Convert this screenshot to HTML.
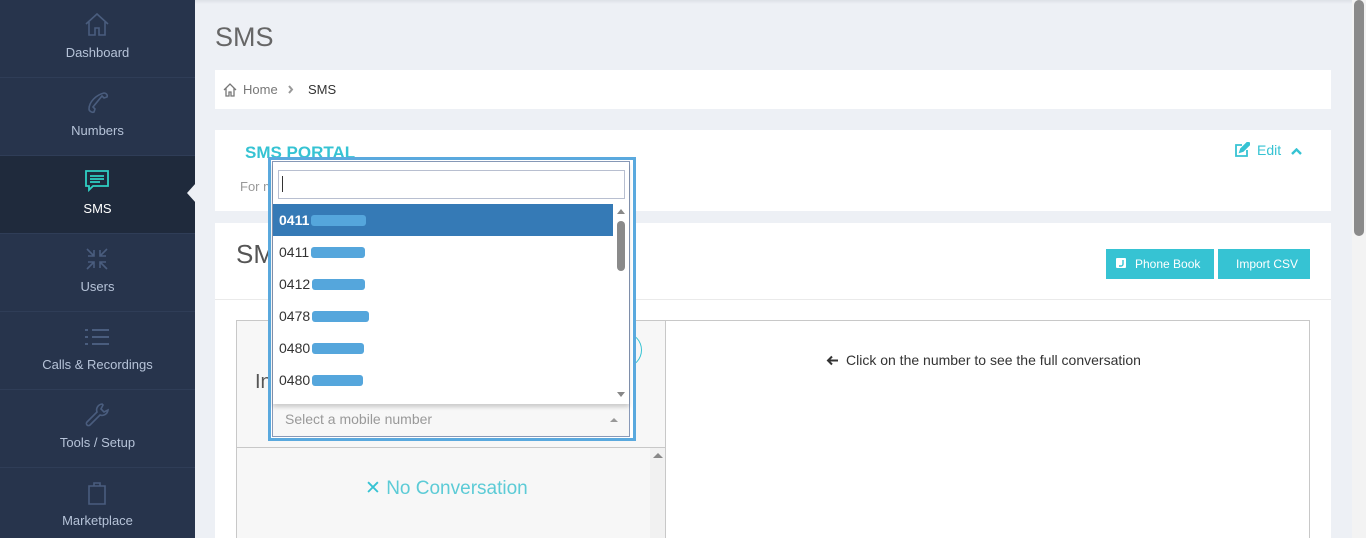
<!DOCTYPE html>
<html style="overflow:hidden;height:538px"><head><meta charset="utf-8"><style>
*{box-sizing:border-box;margin:0;padding:0}
body{width:1366px;height:538px;overflow:hidden;background:#edf0f5;font-family:"Liberation Sans",sans-serif;position:relative}
.sb{position:absolute;left:0;top:0;width:195px;height:538px;background:#27344c}
.it{position:absolute;left:0;width:195px;height:78px;border-bottom:1px solid #2f3d57;color:#b6c3d8;font-size:13px;text-align:center}
.it .lbl{position:absolute;left:0;right:0;top:45px}
.it svg{position:absolute;left:84px;top:12px}
.ab{position:absolute}
.box{position:absolute;background:#fff}
.row{position:absolute;left:273px;width:340px;height:32px;font-size:14px;color:#333;padding:8px 0 0 6px}
.bar{display:inline-block;height:11px;background:#55a6dc;border-radius:3px;vertical-align:-1px;margin-left:2px}
</style></head><body>
<div class="sb">
 <div class="it" style="top:0"><svg width="26" height="26" viewBox="0 0 26 26" fill="none" stroke="#4a5d7e" stroke-width="1.6"><path d="M2 12 13 2 24 12M5 10v13h6v-7h4v7h6V10"/></svg><div class="lbl">Dashboard</div></div>
 <div class="it" style="top:78px"><svg width="26" height="26" viewBox="0 0 26 26" fill="none" stroke="#4a5d7e" stroke-width="1.6"><path d="M20 3c2 0 4 2 3 4l-3 1-2-2-9 11 2 2-1 3c-2 1-5-1-5-3C5 12 12 5 20 3z"/></svg><div class="lbl">Numbers</div></div>
 <div class="it" style="top:156px;background:#1f2a3c;color:#fff"><svg width="26" height="26" viewBox="0 0 26 26" fill="none" stroke="#2fd0c4" stroke-width="1.8"><path d="M2 3h22v15H9l-4 4v-4H2z"/><path d="M6 8h14M6 11h14M6 14h10"/></svg><div class="lbl">SMS</div></div>
 <div class="ab" style="left:187px;top:183px;width:0;height:0;border-top:10px solid transparent;border-bottom:10px solid transparent;border-right:9px solid #edf0f5"></div>
 <div class="it" style="top:234px"><svg width="26" height="26" viewBox="0 0 26 26" fill="none" stroke="#4a5d7e" stroke-width="1.6"><path d="M3 3l7 7M4 10h6V4M23 3l-7 7M22 10h-6V4M3 23l7-7M4 16h6v6M23 23l-7-7M22 16h-6v6"/></svg><div class="lbl">Users</div></div>
 <div class="it" style="top:312px"><svg width="26" height="26" viewBox="0 0 26 26" fill="none" stroke="#4a5d7e" stroke-width="2"><path d="M1 6h3M8 6h17M1 13h3M8 13h17M1 20h3M8 20h17"/></svg><div class="lbl">Calls &amp; Recordings</div></div>
 <div class="it" style="top:390px"><svg width="26" height="26" viewBox="0 0 26 26" fill="none" stroke="#4a5d7e" stroke-width="1.6"><path d="M18 2a6 6 0 0 0-5 8L3 20a2 2 0 0 0 3 3l10-10a6 6 0 0 0 8-5l-4 2-3-3 2-4z"/></svg><div class="lbl">Tools / Setup</div></div>
 <div class="it" style="top:468px;border:none"><svg width="26" height="26" viewBox="0 0 26 26" fill="none" stroke="#4a5d7e" stroke-width="1.6"><path d="M5 6h16v18H5zM10 6V3h6v3"/></svg><div class="lbl">Marketplace</div></div>
</div>
<div class="ab" style="left:195px;top:0;width:1157px;height:4px;background:linear-gradient(#dde1e7,#edf0f5)"></div>
<div class="ab" style="left:1352px;top:0;width:14px;height:538px;background:#f3f3f3"></div>
<div class="ab" style="left:1354px;top:0;width:10px;height:236px;background:#8a8a8a;border-radius:5px"></div>
<div class="ab" style="left:215px;top:22px;font-size:27px;color:#666">SMS</div>
<div class="box" style="left:215px;top:70px;width:1116px;height:39px">
 <svg class="ab" style="left:8px;top:13px" width="14" height="14" viewBox="0 0 14 14" fill="none" stroke="#777" stroke-width="1.3"><path d="M1 7 7 1l6 6M3 5v8h3V9h2v4h3V5"/></svg>
 <span class="ab" style="left:28px;top:12px;font-size:13px;color:#777">Home</span>
 <svg class="ab" style="left:73px;top:15px" width="6" height="9" viewBox="0 0 6 9" fill="none" stroke="#999" stroke-width="2"><path d="M1 1l3 3.5L1 8"/></svg>
 <span class="ab" style="left:93px;top:12px;font-size:13px;color:#333">SMS</span>
</div>
<div class="box" style="left:215px;top:130px;width:1116px;height:81px">
 <span class="ab" style="left:30px;top:13px;font-size:17px;color:#36c3d3;font-weight:bold">SMS PORTAL</span>
 <span class="ab" style="left:25px;top:49px;font-size:13px;color:#999">For m</span>
 <svg class="ab" style="left:1019px;top:12px" width="16" height="16" viewBox="0 0 16 16" fill="none" stroke="#36c3d3" stroke-width="1.8"><path d="M8 3H2v11h11V8"/><path d="M6 10l1-3 7-7 2 2-7 7z" fill="#36c3d3"/></svg>
 <span class="ab" style="left:1042px;top:12px;font-size:14px;color:#36c3d3">Edit</span>
 <svg class="ab" style="left:1076px;top:18px" width="11" height="7" viewBox="0 0 11 7" fill="none" stroke="#36c3d3" stroke-width="2.4"><path d="M1 6l4.5-4.5L10 6"/></svg>
</div>
<div class="box" style="left:215px;top:223px;width:1116px;height:315px;overflow:hidden">
 <span class="ab" style="left:21px;top:16px;font-size:26px;color:#555;font-weight:300">SM</span>
 <div class="ab" style="left:891px;top:26px;width:108px;height:30px;background:#36c3d3;color:#fff;font-size:12px;padding:8px 0 0 29px">Phone Book</div>
 <div class="ab" style="left:901px;top:35px;width:10px;height:10px;background:#fff;border-radius:1px"></div>
 <svg class="ab" style="left:902px;top:36px" width="8" height="8" viewBox="0 0 8 8" fill="none" stroke="#36c3d3" stroke-width="1.4"><path d="M6 1v4a2 2 0 0 1-2 2H2"/></svg>
 <div class="ab" style="left:1003px;top:26px;width:92px;height:30px;background:#36c3d3;color:#fff;font-size:12px;padding:8px 0 0 18px">Import CSV</div>
 <div class="ab" style="left:0;top:76px;width:1116px;height:1px;background:#eaeaea"></div>
 <div class="ab" style="left:21px;top:97px;width:1074px;height:230px;border:1px solid #c8c8c8"></div>
 <div class="ab" style="left:22px;top:98px;width:429px;height:230px;background:#f7f7f7;border-right:1px solid #c8c8c8"></div>
 <div class="ab" style="left:21px;top:224px;width:430px;height:1px;background:#c8c8c8"></div>
 <div class="ab" style="left:435px;top:225px;width:15px;height:100px;background:#f1f1f1"></div>
 <div class="ab" style="left:438px;top:230px;border-left:5px solid transparent;border-right:5px solid transparent;border-bottom:5px solid #888"></div>
 <span class="ab" style="left:40px;top:148px;font-size:20px;color:#555;font-weight:300">In</span>
 <span class="ab" style="left:150px;top:254px;font-size:19px;color:#5ccbd6;font-weight:300"><b style="color:#36c3d3">✕</b> No Conversation</span>
 <svg class="ab" style="left:611px;top:132px" width="13" height="11" viewBox="0 0 13 11" fill="none" stroke="#333" stroke-width="2"><path d="M12 5.5H2M6 1.5L2 5.5l4 4"/></svg>
 <span class="ab" style="left:631px;top:129px;font-size:14px;color:#333">Click on the number to see the full conversation</span>
</div>
<div class="ab" style="left:610px;top:333px;width:32px;height:34px;border:1px solid #36c3d3;border-radius:50%"></div>
<div class="ab" style="left:268px;top:157px;width:368px;height:284px;border:3px solid #5aa9de;background:#fff"></div>
<div class="ab" style="left:272px;top:161px;width:358px;height:276px;border:1px solid #8899b8;background:#f7f7f7"></div>
<div class="ab" style="left:273px;top:162px;width:356px;height:242px;background:#fff;box-shadow:0 3px 4px rgba(0,0,0,.18)"></div>
<div class="ab" style="left:278px;top:170px;width:347px;height:29px;border:1px solid #b8bfd0;background:#fff"></div>
<div class="ab" style="left:282px;top:176px;width:1px;height:16px;background:#333"></div>
<div class="row" style="top:204px;background:#357ab6;color:#fff;font-weight:bold">0411<span class="bar" style="width:55px"></span></div>
<div class="row" style="top:236px">0411<span class="bar" style="width:54px"></span></div>
<div class="row" style="top:268px">0412<span class="bar" style="width:53px"></span></div>
<div class="row" style="top:300px">0478<span class="bar" style="width:57px"></span></div>
<div class="row" style="top:332px">0480<span class="bar" style="width:52px"></span></div>
<div class="row" style="top:364px">0480<span class="bar" style="width:51px"></span></div>
<div class="ab" style="left:617px;top:221px;width:8px;height:50px;background:#8a8a8a;border-radius:4px"></div>
<div class="ab" style="left:617px;top:209px;border-left:4px solid transparent;border-right:4px solid transparent;border-bottom:5px solid #888"></div>
<div class="ab" style="left:617px;top:392px;border-left:4px solid transparent;border-right:4px solid transparent;border-top:5px solid #888"></div>
<span class="ab" style="left:285px;top:411px;font-size:14px;color:#999">Select a mobile number</span>
<div class="ab" style="left:610px;top:418px;border-left:4px solid transparent;border-right:4px solid transparent;border-bottom:4px solid #999"></div>
</body></html>
